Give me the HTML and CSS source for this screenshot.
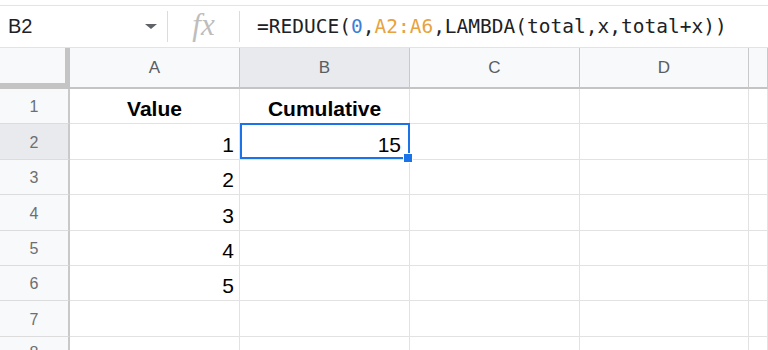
FILE: index.html
```html
<!DOCTYPE html>
<html lang="en">
<head>
  <meta charset="UTF-8">
  <title>REDUCE example</title>
  <link rel="stylesheet" href="styles.css">
</head>
<body>
  <div class="formula-bar">
    <div class="name-box">
      <span class="ref">B2</span>
      <span class="caret"></span>
    </div>
    <div class="sep"></div>
    <div class="fx">fx</div>
    <div class="sep"></div>
    <div class="formula">=REDUCE(<span class="num">0</span>,<span class="range">A2:A6</span>,LAMBDA(total,x,total+x))</div>
  </div>

  <div class="sheet">
    <div class="corner"></div>
    <div class="col-head">A</div>
    <div class="col-head active">B</div>
    <div class="col-head">C</div>
    <div class="col-head">D</div>
    <div class="col-head"></div>

    <div class="row-head">1</div>
    <div class="cell bold center">Value</div>
    <div class="cell bold center">Cumulative</div>
    <div class="cell"></div><div class="cell"></div><div class="cell"></div>

    <div class="row-head active">2</div>
    <div class="cell">1</div>
    <div class="cell selected">15</div>
    <div class="cell"></div><div class="cell"></div><div class="cell"></div>

    <div class="row-head">3</div>
    <div class="cell">2</div>
    <div class="cell"></div><div class="cell"></div><div class="cell"></div><div class="cell"></div>

    <div class="row-head">4</div>
    <div class="cell">3</div>
    <div class="cell"></div><div class="cell"></div><div class="cell"></div><div class="cell"></div>

    <div class="row-head">5</div>
    <div class="cell">4</div>
    <div class="cell"></div><div class="cell"></div><div class="cell"></div><div class="cell"></div>

    <div class="row-head">6</div>
    <div class="cell">5</div>
    <div class="cell"></div><div class="cell"></div><div class="cell"></div><div class="cell"></div>

    <div class="row-head">7</div>
    <div class="cell"></div><div class="cell"></div><div class="cell"></div><div class="cell"></div><div class="cell"></div>

    <div class="row-head">8</div>
    <div class="cell"></div><div class="cell"></div><div class="cell"></div><div class="cell"></div><div class="cell"></div>
  </div>
</body>
</html>
```

FILE: styles.css
```css
body { margin: 0; width: 768px; height: 350px; overflow: hidden; background: #fff; font-family: "Liberation Sans", Arial, sans-serif; color: #000; }

.formula-bar { margin-top: 5px; height: 41px; border-top: 1px solid #e3e3e3; border-bottom: 1px solid #e3e3e3; display: flex; align-items: center; }
.name-box { width: 167px; box-sizing: border-box; padding: 0 10px 0 8px; display: flex; align-items: center; justify-content: space-between; }
.ref { font-size: 20px; color: #202124; }
.caret { width: 0; height: 0; border-left: 6px solid transparent; border-right: 6px solid transparent; border-top: 5px solid #5f6368; }
.sep { width: 1px; height: 31px; background: #dadce0; }
.fx { width: 71px; text-align: center; font-family: "Liberation Serif", serif; font-style: italic; font-size: 31px; color: #bdbdbd; line-height: 32px; padding-bottom: 3px; }
.formula { padding-left: 17px; font-family: "DejaVu Sans Mono", monospace; font-size: 19.5px; color: #202124; white-space: nowrap; }
.formula .num { color: #3d7fd6; }
.formula .range { color: #e8a23e; }

.sheet { display: grid; grid-template-columns: 70px 170px 170px 170px 169px 1fr; grid-template-rows: 41px 35px 36px 35px 36px 35px 35px 36px 30px; }
.corner { background: #f8f9fa; border-right: 5px solid #c4c4c4; border-bottom: 6px solid #c4c4c4; box-sizing: border-box; }
.col-head { background: #f8f9fa; border-right: 1px solid #c9c9c9; border-bottom: 2px solid #c4c4c4; box-sizing: border-box; display: flex; align-items: center; justify-content: center; font-size: 17px; color: #5a5d61; }
.col-head.active { background: #e8eaed; }
.row-head { background: #f8f9fa; border-right: 2px solid #c9c9c9; border-bottom: 1px solid #dcdcdc; box-sizing: border-box; display: flex; align-items: center; justify-content: center; font-size: 16px; color: #6b6f73; padding-top: 2px; }
.row-head.active { background: #e8eaed; }
.cell { border-right: 1px solid #e2e2e2; border-bottom: 1px solid #e2e2e2; box-sizing: border-box; display: flex; align-items: flex-end; justify-content: flex-end; padding: 0 5px 2px; font-size: 21px; line-height: 24px; }
.cell.center { justify-content: center; }
.cell.bold { font-weight: bold; }
.cell.selected { position: relative; padding-right: 8px; }
.cell.selected::after { content: ""; position: absolute; top: -1px; left: 0; right: -1px; bottom: 0; border: 2px solid #1a73e8; }
.cell.selected::before { content: ""; position: absolute; right: -4px; bottom: -4px; width: 8px; height: 8px; background: #1a73e8; border: 1px solid #fff; z-index: 1; }
```
